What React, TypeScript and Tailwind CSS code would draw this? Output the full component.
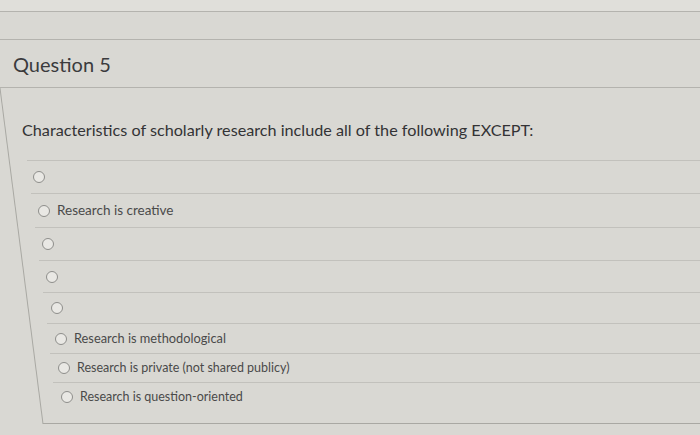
const options = [
  { h: 33, ml: 27, radio: 39, label: "", size: 13 },
  { h: 34, ml: 31, radio: 44, label: "Research is creative", size: 13.5 },
  { h: 33, ml: 35, radio: 48, label: "", size: 13 },
  { h: 32, ml: 39, radio: 52, label: "", size: 13 },
  { h: 31, ml: 43, radio: 57, label: "", size: 13 },
  { h: 30, ml: 47, radio: 61, label: "Research is methodological", size: 12.8 },
  { h: 29, ml: 50, radio: 64, label: "Research is private (not shared publicy)", size: 12.5 },
  { h: 29, ml: 53, radio: 67, label: "Research is question-oriented", size: 12.5 },
];

function Radio() {
  return (
    <span className="w-[12px] h-[12px] shrink-0 rounded-full border border-[#8e8e8b] bg-[#e9e8e4]" />
  );
}

export default function App() {
  return (
    <div
      className="w-[700px] h-[435px] overflow-hidden bg-[#d9d8d3] text-[#3a3a3a]"
      style={{ fontFamily: "Lato, 'Open Sans', sans-serif" }}
    >
      <div className="h-[12px] bg-[#e0dfda] border-b border-[#b4b3ae]" />
      <div className="h-[28px] border-b border-[#b4b3ae]" />

      <div className="h-[48px] flex items-center pl-[13px] border-b border-[#b4b3ae]">
        <h2 className="text-[20px] leading-none text-[#3b3b3d]">Question 5</h2>
      </div>

      <div className="relative">
        <div className="absolute top-0 bottom-0 left-[21px] w-px bg-[#a9a8a3] skew-x-[7.3deg]" />

        <p className="pt-[30px] pl-[22px] text-[16.2px] leading-[24px] text-[#333335]">
          Characteristics of scholarly research include all of the following EXCEPT:
        </p>

        <div className="mt-[18px] flex flex-col">
          {options.map((o, i) => (
            <div
              key={i}
              className="flex items-center border-t border-[#c2c1bc]"
              style={{ height: o.h, marginLeft: o.ml, paddingLeft: o.radio - 6 - o.ml }}
            >
              <Radio />
              {o.label && (
                <span className="ml-[7px] text-[#4a4a4a]" style={{ fontSize: o.size }}>
                  {o.label}
                </span>
              )}
            </div>
          ))}
        </div>

        <div className="h-[12px]" />
        <div className="h-px ml-[43px] bg-[#a9a8a3]" />
      </div>
    </div>
  );
}
